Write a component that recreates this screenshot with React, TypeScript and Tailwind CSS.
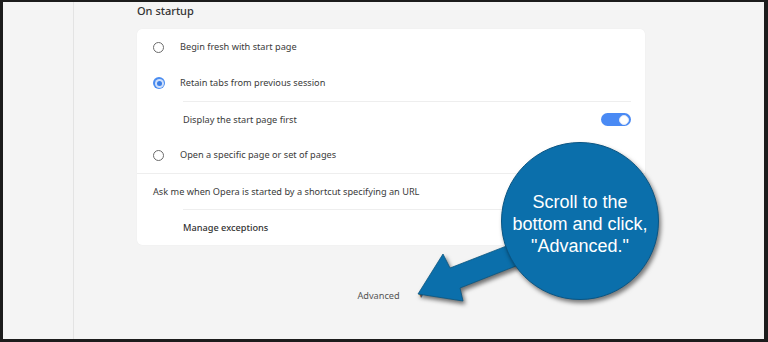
import React from "react";

const font = { fontFamily: '"Noto Sans", "Open Sans", Arial, sans-serif' };

function Radio({ checked }: { checked?: boolean }) {
  if (checked) {
    return (
      <span className="flex h-[12px] w-[12px] items-center justify-center rounded-full bg-[#4a8cf0]">
        <span className="flex h-[9px] w-[9px] items-center justify-center rounded-full bg-[#cfe0fb]">
          <span className="h-[5px] w-[5px] rounded-full bg-[#3d7fe6]" />
        </span>
      </span>
    );
  }
  return <span className="h-[11px] w-[11px] rounded-full border-[1.5px] border-[#6b6b6b]" />;
}

function Toggle() {
  return (
    <span className="flex h-[13px] w-[30px] items-center justify-end rounded-full bg-[#4a8af4] pr-[2px]">
      <span className="h-[10px] w-[10px] rounded-full border border-[#dfe8f7] bg-white" />
    </span>
  );
}

export default function App() {
  return (
    <div
      className="relative flex h-[342px] w-[768px] overflow-hidden border-t-2 border-r-[4px] border-b-[3px] border-l-[3px] border-[#1c1c1c] bg-[#f4f4f4]"
      style={font}
    >
      <aside className="w-[71px] shrink-0 border-r border-[#e3e3e3]" />

      <main className="flex-1 pl-[63px]">
        <h2 className="text-[11px] leading-[18px] font-medium text-[#333]">On startup</h2>

        <div className="mt-[9px] w-[508px] rounded-[5px] bg-white text-[9.2px] text-[#3a3a3a] shadow-[0_0_1px_rgba(0,0,0,0.08)]">
          <div className="flex h-9 items-center pl-[16px]">
            <Radio />
            <span className="ml-[16px]">Begin fresh with start page</span>
          </div>
          <div className="flex h-9 items-center pl-[16px]">
            <Radio checked />
            <span className="ml-[15px]">Retain tabs from previous session</span>
          </div>
          <div className="ml-[46px] mr-[14px] flex h-9 items-center justify-between border-t border-[#eeeeee]">
            <span>Display the start page first</span>
            <Toggle />
          </div>
          <div className="flex h-9 items-center pl-[16px]">
            <Radio />
            <span className="ml-[16px]">Open a specific page or set of pages</span>
          </div>
          <div className="flex h-9 items-center border-t border-[#eeeeee] pl-[16px]">
            <span>Ask me when Opera is started by a shortcut specifying an URL</span>
          </div>
          <div className="ml-[46px] mr-[14px] flex h-9 items-center border-t border-[#eeeeee]">
            <span className="font-medium text-[#333]">Manage exceptions</span>
          </div>
        </div>

        <div className="mt-[44px] flex w-[508px] items-center justify-center gap-[18px] text-[9.2px] text-[#555]">
          <span>Advanced</span>
          <span className="text-[7px] text-[#666]">▼</span>
        </div>
      </main>

      <svg
        className="pointer-events-none absolute top-[-2px] left-[-3px] drop-shadow-[2px_3px_2px_rgba(0,0,0,0.55)]"
        width="768"
        height="342"
        viewBox="0 0 768 342"
      >
        <polygon
          points="418,294 443,254 450,268 545,231 549,253 460,288 463,301"
          fill="#0b6fab"
          stroke="#0a557f"
          strokeWidth="0.8"
          strokeLinejoin="round"
        />
      </svg>

      <div
        className="absolute top-[140px] left-[498px] flex h-[158px] w-[158px] flex-col items-center justify-center rounded-full border border-[#0a5583] bg-[#0b6fab] pt-[6px] text-center text-[18px] leading-[22px] text-white shadow-[2px_3px_4px_rgba(0,0,0,0.5)]"
        style={{ fontFamily: '"Liberation Sans", Arial, sans-serif' }}
      >
        <span>Scroll to the</span>
        <span>bottom and click,</span>
        <span>"Advanced."</span>
      </div>
    </div>
  );
}
